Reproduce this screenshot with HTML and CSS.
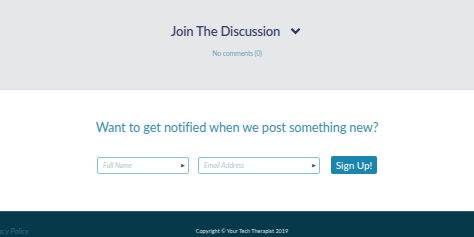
FILE: index.html
```html
<!DOCTYPE html>
<html>
<head>
<meta charset="utf-8">
<link rel="stylesheet" href="styles.css">
</head>
<body>
<section class="discussion">
  <div class="disc-title"><span>Join The Discussion</span>
    <svg class="chev" width="11" height="8" viewBox="0 0 12 8"><path d="M1.5 1.5 L6 6 L10.5 1.5" fill="none" stroke="#2f3a66" stroke-width="2.4"/></svg>
  </div>
  <div class="comments">No comments (0)</div>
</section>
<section class="notify">
  <h2 class="notify-title">Want to get notified when we post something new?</h2>
  <form class="signup">
    <div class="field name"><span class="ph">Full Name</span><span class="ico">&#9654;</span></div>
    <div class="field email"><span class="ph">Email Address</span><span class="ico">&#9654;</span></div>
    <button type="button" class="btn">Sign Up!</button>
  </form>
</section>
<footer class="footer">
  <span class="policy">acy Policy</span>
  <span class="copy">Copyright © Your Tech Therapist 2019</span>
</footer>
</body>
</html>
```
FILE: styles.css
```css
html, body { margin: 0; padding: 0; }
body { width: 474px; height: 237px; overflow: hidden; font-family: Lato, "Open Sans", sans-serif; background: #fff; display: flex; flex-direction: column; }
.discussion { background: #e6e7e9; height: 90px; display: flex; flex-direction: column; align-items: center; box-sizing: border-box; padding-top: 22px; border-bottom: 1px solid #dcdde0; }
.disc-title { display: flex; align-items: center; gap: 10px; color: #353f6c; font-size: 13px; line-height: 19px; margin-left: -2px; letter-spacing: -0.15px; font-weight: 500; }
.chev { margin-top: -1px; }
.comments { color: #6fa6bd; font-size: 7px; margin-top: 8px; letter-spacing: -0.2px; }
.notify { height: 121px; display: flex; flex-direction: column; align-items: center; box-sizing: border-box; padding-top: 29px; }
.notify-title { margin: 0; font-weight: normal; font-size: 12.7px; line-height: 17px; color: #3a8db0; letter-spacing: -0.1px; }
.signup { display: flex; align-items: center; margin-top: 20px; margin-left: 0; }
.field { height: 17px; box-sizing: border-box; border: 1.5px solid #7fc5d9; border-radius: 2px; display: flex; align-items: center; justify-content: space-between; padding: 0 3px 0 5px; }
.name { width: 92px; }
.email { width: 122px; margin-left: 9px; }
.ph { font-size: 7px; font-style: italic; color: #b7c3c8; }
.ico { font-size: 5px; color: #555; }
.btn { margin-left: 11px; width: 46px; height: 18px; border: none; border-radius: 2px; background: #1a86b0; color: #fff; font-family: Lato, sans-serif; font-size: 10px; padding: 0; }
.footer { flex: 1; background: #063a4a; display: flex; align-items: flex-end; position: relative; padding-bottom: 3px; box-sizing: border-box; border-top: 1px solid #2c5a68; }
.policy { position: absolute; left: -2px; bottom: 1px; color: #2e6f86; font-size: 7.5px; font-style: italic; }
.copy { margin: 0 auto; color: #d7e3e7; font-size: 5.5px; position: relative; left: 5px; }
```
